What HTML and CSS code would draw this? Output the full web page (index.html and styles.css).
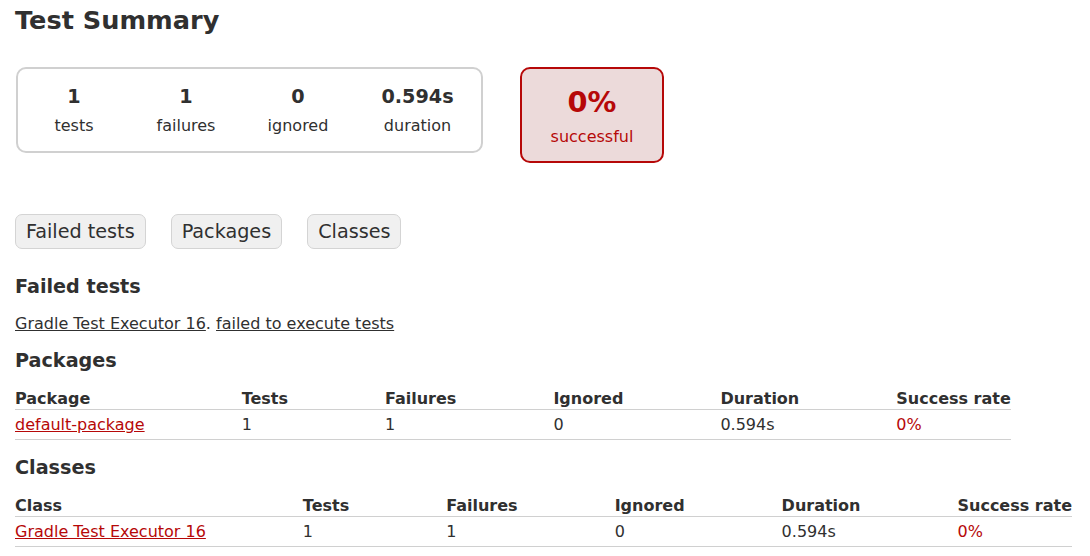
FILE: index.html
```html
<!DOCTYPE html>
<html>
<head>
<meta charset="utf-8">
<title>Test Summary</title>
<link rel="stylesheet" href="styles.css">
</head>
<body>
<div class="content">
  <h1 class="title">Test Summary</h1>
  <div class="summary">
    <div class="summary-group">
      <div class="info-box">
        <div class="counter">1</div>
        <p class="label">tests</p>
      </div>
      <div class="info-box">
        <div class="counter">1</div>
        <p class="label">failures</p>
      </div>
      <div class="info-box">
        <div class="counter">0</div>
        <p class="label">ignored</p>
      </div>
      <div class="info-box info-duration">
        <div class="counter">0.594s</div>
        <p class="label">duration</p>
      </div>
    </div>
    <div class="success-rate">
      <div class="percent">0%</div>
      <p class="label">successful</p>
    </div>
  </div>

  <ul class="tab-links">
    <li class="tab-link"><a href="#tab0">Failed tests</a></li>
    <li class="tab-link"><a href="#tab1">Packages</a></li>
    <li class="tab-link"><a href="#tab2">Classes</a></li>
  </ul>

  <div class="tab" id="tab0">
    <h2 class="section-title">Failed tests</h2>
    <ul class="link-list">
      <li class="link-item"><a class="plain-link" href="#">Gradle Test Executor 16</a>. <a class="plain-link" href="#">failed to execute tests</a></li>
    </ul>
  </div>

  <div class="tab" id="tab1">
    <h2 class="section-title">Packages</h2>
    <table class="report-table">
      <thead>
        <tr><th>Package</th><th>Tests</th><th>Failures</th><th>Ignored</th><th>Duration</th><th>Success rate</th></tr>
      </thead>
      <tbody>
        <tr>
          <td class="failures"><a class="fail-link" href="#">default-package</a></td>
          <td>1</td><td>1</td><td>0</td><td>0.594s</td>
          <td class="failures">0%</td>
        </tr>
      </tbody>
    </table>
  </div>

  <div class="tab" id="tab2">
    <h2 class="section-title">Classes</h2>
    <table class="report-table">
      <thead>
        <tr><th>Class</th><th>Tests</th><th>Failures</th><th>Ignored</th><th>Duration</th><th>Success rate</th></tr>
      </thead>
      <tbody>
        <tr>
          <td class="failures"><a class="fail-link" href="#">Gradle Test Executor 16</a></td>
          <td>1</td><td>1</td><td>0</td><td>0.594s</td>
          <td class="failures">0%</td>
        </tr>
      </tbody>
    </table>
  </div>
</div>
</body>
</html>
```

FILE: styles.css
```css
html, body {
  margin: 0;
  padding: 0;
  background: #ffffff;
}

body {
  font-family: "DejaVu Sans", sans-serif;
  font-size: 16px;
  color: #303030;
}

a, a:visited {
  color: #303030;
}

.content {
  padding: 0 15px 30px 15px;
}

.title {
  font-size: 25.6px;
  font-weight: bold;
  margin: 5px 0 10px 0;
  white-space: nowrap;
}

.summary {
  display: flex;
  align-items: flex-start;
  margin-top: 32px;
  margin-bottom: 41px;
}

.summary-group {
  display: flex;
  border: 2px solid #d0d0d0;
  border-radius: 10px;
  padding: 0;
  margin-left: 1px;
}

.info-box {
  width: 112px;
  padding: 16px 0;
  text-align: center;
}

.info-duration {
  width: 127px;
}

.label {
  margin: 0;
}

.counter {
  font-size: 19.2px;
  font-weight: bold;
  margin-bottom: 8px;
}

.success-rate {
  width: 140px;
  margin-left: 37px;
  padding: 16px 0 15px 0;
  text-align: center;
  border: 2px solid #b60808;
  border-radius: 10px;
  background-color: #ecdada;
  color: #b60808;
}

.percent {
  font-size: 28.8px;
  font-weight: bold;
  margin-bottom: 8px;
}

.tab-links {
  display: flex;
  gap: 25px;
  list-style: none;
  margin: 0 0 16px 0;
  padding: 10px 0;
}

.tab-link {
  padding: 5px 10px;
  border: 1px solid #d4d4d4;
  border-radius: 7px;
  background-color: #f0f0f0;
}

.tab-link a {
  font-size: 19.2px;
  display: block;
  text-decoration: none;
}

.section-title {
  font-size: 19.2px;
  font-weight: bold;
  margin: 16px 0;
  white-space: nowrap;
}

.link-list {
  list-style: none;
  padding-left: 0;
  margin: 16px 0;
}

.link-item {
  margin-bottom: 5px;
}

.report-table {
  border-collapse: collapse;
  border-bottom: 1px solid #d0d0d0;
  min-width: 350px;
}

.report-table th {
  text-align: left;
  white-space: nowrap;
  padding: 1px 0 1px 97px;
  border-bottom: 1px solid #d0d0d0;
}

.report-table td {
  white-space: nowrap;
  padding: 5px 0 5px 97px;
}

.report-table th:first-child,
.report-table td:first-child {
  padding-left: 0;
}

.failures, .fail-link, .fail-link:visited {
  color: #b60808;
}
```
